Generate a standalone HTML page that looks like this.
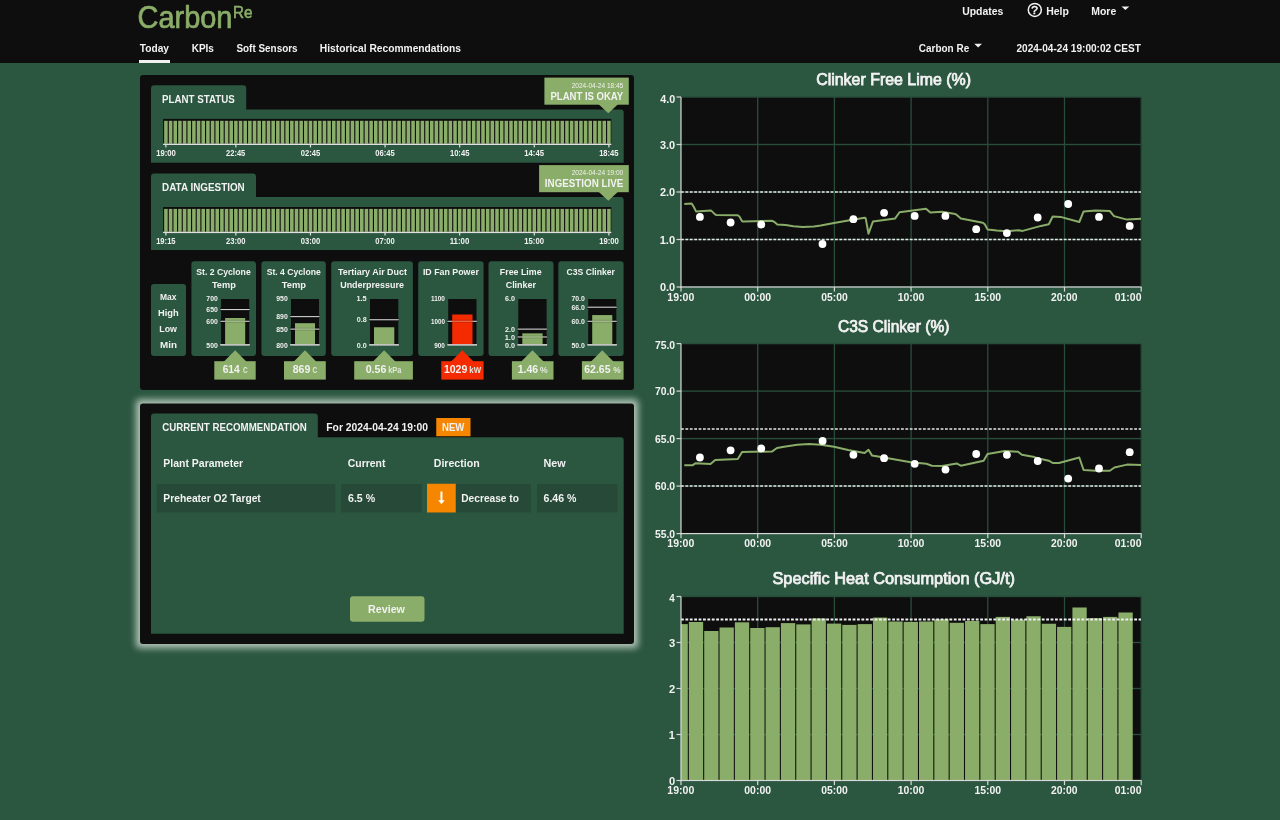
<!DOCTYPE html>
<html><head><meta charset="utf-8"><title>Carbon Re</title>
<style>
html,body{margin:0;padding:0;background:#2b5640;width:1280px;height:820px;overflow:hidden}
svg{display:block;font-family:"Liberation Sans", sans-serif;opacity:0.999}
</style></head><body>
<svg width="1280" height="820" viewBox="0 0 1280 820">
<defs><filter id="glow" x="-10%" y="-10%" width="120%" height="120%"><feMorphology operator="dilate" radius="4" in="SourceAlpha" result="d"/><feGaussianBlur in="d" stdDeviation="3.5" result="b"/><feFlood flood-color="#b4c6b9" result="c"/><feComposite in="c" in2="b" operator="in"/></filter></defs>
<rect x="0.00" y="0.00" width="1280.00" height="63.00" fill="#0e0e0e"/>
<text id="t0" x="137.50" y="28.00" font-size="31" font-weight="normal" fill="#8aad69" textLength="94.95" lengthAdjust="spacingAndGlyphs" stroke="#8aad69" stroke-width="0.7">Carbon</text>
<text id="t1" x="233.00" y="17.50" font-size="16.5" font-weight="normal" fill="#8aad69" textLength="19.45" lengthAdjust="spacingAndGlyphs" stroke="#8aad69" stroke-width="0.6">Re</text>
<text id="t2" x="139.75" y="52.00" font-size="11.5" font-weight="bold" fill="#f2f2f2" textLength="29.20" lengthAdjust="spacingAndGlyphs">Today</text>
<text id="t3" x="191.70" y="52.00" font-size="11.5" font-weight="bold" fill="#f2f2f2" textLength="22.20" lengthAdjust="spacingAndGlyphs">KPIs</text>
<text id="t4" x="236.45" y="52.00" font-size="11.5" font-weight="bold" fill="#f2f2f2" textLength="61.20" lengthAdjust="spacingAndGlyphs">Soft Sensors</text>
<text id="t5" x="319.85" y="52.00" font-size="11.5" font-weight="bold" fill="#f2f2f2" textLength="141.20" lengthAdjust="spacingAndGlyphs">Historical Recommendations</text>
<rect x="139.00" y="60.00" width="31.00" height="3.00" fill="#f2f2f2"/>
<text id="t6" x="962.20" y="14.90" font-size="11.5" font-weight="bold" fill="#f2f2f2" textLength="41.20" lengthAdjust="spacingAndGlyphs">Updates</text>
<circle cx="1034.8" cy="9.9" r="6.5" fill="none" stroke="#f2f2f2" stroke-width="1.5"/>
<text id="t7" x="1031.35" y="13.60" font-size="10" font-weight="normal" fill="#f2f2f2" textLength="6.60" lengthAdjust="spacingAndGlyphs" stroke="#f2f2f2" stroke-width="0.5">?</text>
<text id="t8" x="1046.20" y="14.90" font-size="11.5" font-weight="bold" fill="#f2f2f2" textLength="22.70" lengthAdjust="spacingAndGlyphs">Help</text>
<text id="t9" x="1091.25" y="14.90" font-size="11.5" font-weight="bold" fill="#f2f2f2" textLength="24.95" lengthAdjust="spacingAndGlyphs">More</text>
<path d="M1121.5,6.5 L1129.3,6.5 L1125.4,10 Z" fill="#f2f2f2"/>
<text id="t10" x="918.75" y="52.00" font-size="11.5" font-weight="bold" fill="#f2f2f2" textLength="50.45" lengthAdjust="spacingAndGlyphs">Carbon Re</text>
<path d="M974.3,43.7 L982,43.7 L978.15,47.5 Z" fill="#f2f2f2"/>
<text id="t11" x="1016.45" y="52.00" font-size="11.5" font-weight="bold" fill="#f2f2f2" textLength="124.45" lengthAdjust="spacingAndGlyphs">2024-04-24 19:00:02 CEST</text>
<rect x="140.00" y="75.00" width="494.00" height="315.00" fill="#0e0e0e" rx="3"/>
<path d="M151,88.2 Q151,85.2 154,85.2 L243.2,85.2 Q246.2,85.2 246.2,88.2 L246.2,109.4 L620.7,109.4 Q623.7,109.4 623.7,112.4 L623.7,162.7 L151,162.7 Z" fill="#2b5640"/>
<text id="t12" x="162.05" y="103.00" font-size="11.2" font-weight="bold" fill="#f2f2f2" textLength="72.70" lengthAdjust="spacingAndGlyphs">PLANT STATUS</text>
<rect x="163.10" y="118.90" width="448.20" height="25.00" fill="#0e0e0e"/>
<rect x="164.15" y="120.80" width="3.55" height="22.90" fill="#8aad69"/>
<rect x="168.81" y="120.80" width="3.55" height="22.90" fill="#8aad69"/>
<rect x="173.48" y="120.80" width="3.55" height="22.90" fill="#8aad69"/>
<rect x="178.14" y="120.80" width="3.55" height="22.90" fill="#8aad69"/>
<rect x="182.80" y="120.80" width="3.55" height="22.90" fill="#8aad69"/>
<rect x="187.47" y="120.80" width="3.55" height="22.90" fill="#8aad69"/>
<rect x="192.13" y="120.80" width="3.55" height="22.90" fill="#8aad69"/>
<rect x="196.79" y="120.80" width="3.55" height="22.90" fill="#8aad69"/>
<rect x="201.45" y="120.80" width="3.55" height="22.90" fill="#8aad69"/>
<rect x="206.12" y="120.80" width="3.55" height="22.90" fill="#8aad69"/>
<rect x="210.78" y="120.80" width="3.55" height="22.90" fill="#8aad69"/>
<rect x="215.44" y="120.80" width="3.55" height="22.90" fill="#8aad69"/>
<rect x="220.11" y="120.80" width="3.55" height="22.90" fill="#8aad69"/>
<rect x="224.77" y="120.80" width="3.55" height="22.90" fill="#8aad69"/>
<rect x="229.43" y="120.80" width="3.55" height="22.90" fill="#8aad69"/>
<rect x="234.10" y="120.80" width="3.55" height="22.90" fill="#8aad69"/>
<rect x="238.76" y="120.80" width="3.55" height="22.90" fill="#8aad69"/>
<rect x="243.42" y="120.80" width="3.55" height="22.90" fill="#8aad69"/>
<rect x="248.08" y="120.80" width="3.55" height="22.90" fill="#8aad69"/>
<rect x="252.75" y="120.80" width="3.55" height="22.90" fill="#8aad69"/>
<rect x="257.41" y="120.80" width="3.55" height="22.90" fill="#8aad69"/>
<rect x="262.07" y="120.80" width="3.55" height="22.90" fill="#8aad69"/>
<rect x="266.74" y="120.80" width="3.55" height="22.90" fill="#8aad69"/>
<rect x="271.40" y="120.80" width="3.55" height="22.90" fill="#8aad69"/>
<rect x="276.06" y="120.80" width="3.55" height="22.90" fill="#8aad69"/>
<rect x="280.73" y="120.80" width="3.55" height="22.90" fill="#8aad69"/>
<rect x="285.39" y="120.80" width="3.55" height="22.90" fill="#8aad69"/>
<rect x="290.05" y="120.80" width="3.55" height="22.90" fill="#8aad69"/>
<rect x="294.71" y="120.80" width="3.55" height="22.90" fill="#8aad69"/>
<rect x="299.38" y="120.80" width="3.55" height="22.90" fill="#8aad69"/>
<rect x="304.04" y="120.80" width="3.55" height="22.90" fill="#8aad69"/>
<rect x="308.70" y="120.80" width="3.55" height="22.90" fill="#8aad69"/>
<rect x="313.37" y="120.80" width="3.55" height="22.90" fill="#8aad69"/>
<rect x="318.03" y="120.80" width="3.55" height="22.90" fill="#8aad69"/>
<rect x="322.69" y="120.80" width="3.55" height="22.90" fill="#8aad69"/>
<rect x="327.36" y="120.80" width="3.55" height="22.90" fill="#8aad69"/>
<rect x="332.02" y="120.80" width="3.55" height="22.90" fill="#8aad69"/>
<rect x="336.68" y="120.80" width="3.55" height="22.90" fill="#8aad69"/>
<rect x="341.34" y="120.80" width="3.55" height="22.90" fill="#8aad69"/>
<rect x="346.01" y="120.80" width="3.55" height="22.90" fill="#8aad69"/>
<rect x="350.67" y="120.80" width="3.55" height="22.90" fill="#8aad69"/>
<rect x="355.33" y="120.80" width="3.55" height="22.90" fill="#8aad69"/>
<rect x="360.00" y="120.80" width="3.55" height="22.90" fill="#8aad69"/>
<rect x="364.66" y="120.80" width="3.55" height="22.90" fill="#8aad69"/>
<rect x="369.32" y="120.80" width="3.55" height="22.90" fill="#8aad69"/>
<rect x="373.99" y="120.80" width="3.55" height="22.90" fill="#8aad69"/>
<rect x="378.65" y="120.80" width="3.55" height="22.90" fill="#8aad69"/>
<rect x="383.31" y="120.80" width="3.55" height="22.90" fill="#8aad69"/>
<rect x="387.97" y="120.80" width="3.55" height="22.90" fill="#8aad69"/>
<rect x="392.64" y="120.80" width="3.55" height="22.90" fill="#8aad69"/>
<rect x="397.30" y="120.80" width="3.55" height="22.90" fill="#8aad69"/>
<rect x="401.96" y="120.80" width="3.55" height="22.90" fill="#8aad69"/>
<rect x="406.63" y="120.80" width="3.55" height="22.90" fill="#8aad69"/>
<rect x="411.29" y="120.80" width="3.55" height="22.90" fill="#8aad69"/>
<rect x="415.95" y="120.80" width="3.55" height="22.90" fill="#8aad69"/>
<rect x="420.62" y="120.80" width="3.55" height="22.90" fill="#8aad69"/>
<rect x="425.28" y="120.80" width="3.55" height="22.90" fill="#8aad69"/>
<rect x="429.94" y="120.80" width="3.55" height="22.90" fill="#8aad69"/>
<rect x="434.60" y="120.80" width="3.55" height="22.90" fill="#8aad69"/>
<rect x="439.27" y="120.80" width="3.55" height="22.90" fill="#8aad69"/>
<rect x="443.93" y="120.80" width="3.55" height="22.90" fill="#8aad69"/>
<rect x="448.59" y="120.80" width="3.55" height="22.90" fill="#8aad69"/>
<rect x="453.26" y="120.80" width="3.55" height="22.90" fill="#8aad69"/>
<rect x="457.92" y="120.80" width="3.55" height="22.90" fill="#8aad69"/>
<rect x="462.58" y="120.80" width="3.55" height="22.90" fill="#8aad69"/>
<rect x="467.25" y="120.80" width="3.55" height="22.90" fill="#8aad69"/>
<rect x="471.91" y="120.80" width="3.55" height="22.90" fill="#8aad69"/>
<rect x="476.57" y="120.80" width="3.55" height="22.90" fill="#8aad69"/>
<rect x="481.23" y="120.80" width="3.55" height="22.90" fill="#8aad69"/>
<rect x="485.90" y="120.80" width="3.55" height="22.90" fill="#8aad69"/>
<rect x="490.56" y="120.80" width="3.55" height="22.90" fill="#8aad69"/>
<rect x="495.22" y="120.80" width="3.55" height="22.90" fill="#8aad69"/>
<rect x="499.89" y="120.80" width="3.55" height="22.90" fill="#8aad69"/>
<rect x="504.55" y="120.80" width="3.55" height="22.90" fill="#8aad69"/>
<rect x="509.21" y="120.80" width="3.55" height="22.90" fill="#8aad69"/>
<rect x="513.88" y="120.80" width="3.55" height="22.90" fill="#8aad69"/>
<rect x="518.54" y="120.80" width="3.55" height="22.90" fill="#8aad69"/>
<rect x="523.20" y="120.80" width="3.55" height="22.90" fill="#8aad69"/>
<rect x="527.86" y="120.80" width="3.55" height="22.90" fill="#8aad69"/>
<rect x="532.53" y="120.80" width="3.55" height="22.90" fill="#8aad69"/>
<rect x="537.19" y="120.80" width="3.55" height="22.90" fill="#8aad69"/>
<rect x="541.85" y="120.80" width="3.55" height="22.90" fill="#8aad69"/>
<rect x="546.52" y="120.80" width="3.55" height="22.90" fill="#8aad69"/>
<rect x="551.18" y="120.80" width="3.55" height="22.90" fill="#8aad69"/>
<rect x="555.84" y="120.80" width="3.55" height="22.90" fill="#8aad69"/>
<rect x="560.50" y="120.80" width="3.55" height="22.90" fill="#8aad69"/>
<rect x="565.17" y="120.80" width="3.55" height="22.90" fill="#8aad69"/>
<rect x="569.83" y="120.80" width="3.55" height="22.90" fill="#8aad69"/>
<rect x="574.49" y="120.80" width="3.55" height="22.90" fill="#8aad69"/>
<rect x="579.16" y="120.80" width="3.55" height="22.90" fill="#8aad69"/>
<rect x="583.82" y="120.80" width="3.55" height="22.90" fill="#8aad69"/>
<rect x="588.48" y="120.80" width="3.55" height="22.90" fill="#8aad69"/>
<rect x="593.15" y="120.80" width="3.55" height="22.90" fill="#8aad69"/>
<rect x="597.81" y="120.80" width="3.55" height="22.90" fill="#8aad69"/>
<rect x="602.47" y="120.80" width="3.55" height="22.90" fill="#8aad69"/>
<rect x="607.13" y="120.80" width="3.55" height="22.90" fill="#8aad69"/>
<rect x="163.10" y="143.60" width="448.20" height="1.40" fill="#e0e0e0"/>
<rect x="165.30" y="144.90" width="1.20" height="2.50" fill="#e0e0e0"/>
<text id="t13" x="156.15" y="155.60" font-size="8.4" font-weight="bold" fill="#f2f2f2" textLength="19.70" lengthAdjust="spacingAndGlyphs">19:00</text>
<rect x="235.25" y="144.90" width="1.20" height="2.50" fill="#e0e0e0"/>
<text id="t14" x="226.10" y="155.60" font-size="8.4" font-weight="bold" fill="#f2f2f2" textLength="19.20" lengthAdjust="spacingAndGlyphs">22:45</text>
<rect x="309.85" y="144.90" width="1.20" height="2.50" fill="#e0e0e0"/>
<text id="t15" x="300.70" y="155.60" font-size="8.4" font-weight="bold" fill="#f2f2f2" textLength="19.45" lengthAdjust="spacingAndGlyphs">02:45</text>
<rect x="384.46" y="144.90" width="1.20" height="2.50" fill="#e0e0e0"/>
<text id="t16" x="375.31" y="155.60" font-size="8.4" font-weight="bold" fill="#f2f2f2" textLength="19.45" lengthAdjust="spacingAndGlyphs">06:45</text>
<rect x="459.07" y="144.90" width="1.20" height="2.50" fill="#e0e0e0"/>
<text id="t17" x="449.92" y="155.60" font-size="8.4" font-weight="bold" fill="#f2f2f2" textLength="19.45" lengthAdjust="spacingAndGlyphs">10:45</text>
<rect x="533.68" y="144.90" width="1.20" height="2.50" fill="#e0e0e0"/>
<text id="t18" x="524.28" y="155.60" font-size="8.4" font-weight="bold" fill="#f2f2f2" textLength="19.70" lengthAdjust="spacingAndGlyphs">14:45</text>
<rect x="608.28" y="144.90" width="1.20" height="2.50" fill="#e0e0e0"/>
<text id="t19" x="599.13" y="155.60" font-size="8.4" font-weight="bold" fill="#f2f2f2" textLength="19.45" lengthAdjust="spacingAndGlyphs">18:45</text>
<rect x="544.40" y="77.60" width="84.40" height="27.10" fill="#8aad69"/>
<path d="M598,103.69999999999999 L618.6,103.69999999999999 L608.3,113.29999999999998 Z" fill="#8aad69"/>
<text id="t20" x="571.75" y="87.70" font-size="6.8" font-weight="normal" fill="#f2f2f2" textLength="51.45" lengthAdjust="spacingAndGlyphs">2024-04-24 18:45</text>
<text id="t21" x="550.50" y="99.60" font-size="10.6" font-weight="bold" fill="#f2f2f2" textLength="72.70" lengthAdjust="spacingAndGlyphs">PLANT IS OKAY</text>
<path d="M151,176.4 Q151,173.4 154,173.4 L253,173.4 Q256,173.4 256,176.4 L256,197.0 L620.7,197.0 Q623.7,197.0 623.7,200.0 L623.7,250.0 L151,250.0 Z" fill="#2b5640"/>
<text id="t22" x="162.05" y="191.20" font-size="11.2" font-weight="bold" fill="#f2f2f2" textLength="82.70" lengthAdjust="spacingAndGlyphs">DATA INGESTION</text>
<rect x="163.10" y="207.00" width="448.20" height="25.00" fill="#0e0e0e"/>
<rect x="164.15" y="208.90" width="3.55" height="22.90" fill="#8aad69"/>
<rect x="168.81" y="208.90" width="3.55" height="22.90" fill="#8aad69"/>
<rect x="173.48" y="208.90" width="3.55" height="22.90" fill="#8aad69"/>
<rect x="178.14" y="208.90" width="3.55" height="22.90" fill="#8aad69"/>
<rect x="182.80" y="208.90" width="3.55" height="22.90" fill="#8aad69"/>
<rect x="187.47" y="208.90" width="3.55" height="22.90" fill="#8aad69"/>
<rect x="192.13" y="208.90" width="3.55" height="22.90" fill="#8aad69"/>
<rect x="196.79" y="208.90" width="3.55" height="22.90" fill="#8aad69"/>
<rect x="201.45" y="208.90" width="3.55" height="22.90" fill="#8aad69"/>
<rect x="206.12" y="208.90" width="3.55" height="22.90" fill="#8aad69"/>
<rect x="210.78" y="208.90" width="3.55" height="22.90" fill="#8aad69"/>
<rect x="215.44" y="208.90" width="3.55" height="22.90" fill="#8aad69"/>
<rect x="220.11" y="208.90" width="3.55" height="22.90" fill="#8aad69"/>
<rect x="224.77" y="208.90" width="3.55" height="22.90" fill="#8aad69"/>
<rect x="229.43" y="208.90" width="3.55" height="22.90" fill="#8aad69"/>
<rect x="234.10" y="208.90" width="3.55" height="22.90" fill="#8aad69"/>
<rect x="238.76" y="208.90" width="3.55" height="22.90" fill="#8aad69"/>
<rect x="243.42" y="208.90" width="3.55" height="22.90" fill="#8aad69"/>
<rect x="248.08" y="208.90" width="3.55" height="22.90" fill="#8aad69"/>
<rect x="252.75" y="208.90" width="3.55" height="22.90" fill="#8aad69"/>
<rect x="257.41" y="208.90" width="3.55" height="22.90" fill="#8aad69"/>
<rect x="262.07" y="208.90" width="3.55" height="22.90" fill="#8aad69"/>
<rect x="266.74" y="208.90" width="3.55" height="22.90" fill="#8aad69"/>
<rect x="271.40" y="208.90" width="3.55" height="22.90" fill="#8aad69"/>
<rect x="276.06" y="208.90" width="3.55" height="22.90" fill="#8aad69"/>
<rect x="280.73" y="208.90" width="3.55" height="22.90" fill="#8aad69"/>
<rect x="285.39" y="208.90" width="3.55" height="22.90" fill="#8aad69"/>
<rect x="290.05" y="208.90" width="3.55" height="22.90" fill="#8aad69"/>
<rect x="294.71" y="208.90" width="3.55" height="22.90" fill="#8aad69"/>
<rect x="299.38" y="208.90" width="3.55" height="22.90" fill="#8aad69"/>
<rect x="304.04" y="208.90" width="3.55" height="22.90" fill="#8aad69"/>
<rect x="308.70" y="208.90" width="3.55" height="22.90" fill="#8aad69"/>
<rect x="313.37" y="208.90" width="3.55" height="22.90" fill="#8aad69"/>
<rect x="318.03" y="208.90" width="3.55" height="22.90" fill="#8aad69"/>
<rect x="322.69" y="208.90" width="3.55" height="22.90" fill="#8aad69"/>
<rect x="327.36" y="208.90" width="3.55" height="22.90" fill="#8aad69"/>
<rect x="332.02" y="208.90" width="3.55" height="22.90" fill="#8aad69"/>
<rect x="336.68" y="208.90" width="3.55" height="22.90" fill="#8aad69"/>
<rect x="341.34" y="208.90" width="3.55" height="22.90" fill="#8aad69"/>
<rect x="346.01" y="208.90" width="3.55" height="22.90" fill="#8aad69"/>
<rect x="350.67" y="208.90" width="3.55" height="22.90" fill="#8aad69"/>
<rect x="355.33" y="208.90" width="3.55" height="22.90" fill="#8aad69"/>
<rect x="360.00" y="208.90" width="3.55" height="22.90" fill="#8aad69"/>
<rect x="364.66" y="208.90" width="3.55" height="22.90" fill="#8aad69"/>
<rect x="369.32" y="208.90" width="3.55" height="22.90" fill="#8aad69"/>
<rect x="373.99" y="208.90" width="3.55" height="22.90" fill="#8aad69"/>
<rect x="378.65" y="208.90" width="3.55" height="22.90" fill="#8aad69"/>
<rect x="383.31" y="208.90" width="3.55" height="22.90" fill="#8aad69"/>
<rect x="387.97" y="208.90" width="3.55" height="22.90" fill="#8aad69"/>
<rect x="392.64" y="208.90" width="3.55" height="22.90" fill="#8aad69"/>
<rect x="397.30" y="208.90" width="3.55" height="22.90" fill="#8aad69"/>
<rect x="401.96" y="208.90" width="3.55" height="22.90" fill="#8aad69"/>
<rect x="406.63" y="208.90" width="3.55" height="22.90" fill="#8aad69"/>
<rect x="411.29" y="208.90" width="3.55" height="22.90" fill="#8aad69"/>
<rect x="415.95" y="208.90" width="3.55" height="22.90" fill="#8aad69"/>
<rect x="420.62" y="208.90" width="3.55" height="22.90" fill="#8aad69"/>
<rect x="425.28" y="208.90" width="3.55" height="22.90" fill="#8aad69"/>
<rect x="429.94" y="208.90" width="3.55" height="22.90" fill="#8aad69"/>
<rect x="434.60" y="208.90" width="3.55" height="22.90" fill="#8aad69"/>
<rect x="439.27" y="208.90" width="3.55" height="22.90" fill="#8aad69"/>
<rect x="443.93" y="208.90" width="3.55" height="22.90" fill="#8aad69"/>
<rect x="448.59" y="208.90" width="3.55" height="22.90" fill="#8aad69"/>
<rect x="453.26" y="208.90" width="3.55" height="22.90" fill="#8aad69"/>
<rect x="457.92" y="208.90" width="3.55" height="22.90" fill="#8aad69"/>
<rect x="462.58" y="208.90" width="3.55" height="22.90" fill="#8aad69"/>
<rect x="467.25" y="208.90" width="3.55" height="22.90" fill="#8aad69"/>
<rect x="471.91" y="208.90" width="3.55" height="22.90" fill="#8aad69"/>
<rect x="476.57" y="208.90" width="3.55" height="22.90" fill="#8aad69"/>
<rect x="481.23" y="208.90" width="3.55" height="22.90" fill="#8aad69"/>
<rect x="485.90" y="208.90" width="3.55" height="22.90" fill="#8aad69"/>
<rect x="490.56" y="208.90" width="3.55" height="22.90" fill="#8aad69"/>
<rect x="495.22" y="208.90" width="3.55" height="22.90" fill="#8aad69"/>
<rect x="499.89" y="208.90" width="3.55" height="22.90" fill="#8aad69"/>
<rect x="504.55" y="208.90" width="3.55" height="22.90" fill="#8aad69"/>
<rect x="509.21" y="208.90" width="3.55" height="22.90" fill="#8aad69"/>
<rect x="513.88" y="208.90" width="3.55" height="22.90" fill="#8aad69"/>
<rect x="518.54" y="208.90" width="3.55" height="22.90" fill="#8aad69"/>
<rect x="523.20" y="208.90" width="3.55" height="22.90" fill="#8aad69"/>
<rect x="527.86" y="208.90" width="3.55" height="22.90" fill="#8aad69"/>
<rect x="532.53" y="208.90" width="3.55" height="22.90" fill="#8aad69"/>
<rect x="537.19" y="208.90" width="3.55" height="22.90" fill="#8aad69"/>
<rect x="541.85" y="208.90" width="3.55" height="22.90" fill="#8aad69"/>
<rect x="546.52" y="208.90" width="3.55" height="22.90" fill="#8aad69"/>
<rect x="551.18" y="208.90" width="3.55" height="22.90" fill="#8aad69"/>
<rect x="555.84" y="208.90" width="3.55" height="22.90" fill="#8aad69"/>
<rect x="560.50" y="208.90" width="3.55" height="22.90" fill="#8aad69"/>
<rect x="565.17" y="208.90" width="3.55" height="22.90" fill="#8aad69"/>
<rect x="569.83" y="208.90" width="3.55" height="22.90" fill="#8aad69"/>
<rect x="574.49" y="208.90" width="3.55" height="22.90" fill="#8aad69"/>
<rect x="579.16" y="208.90" width="3.55" height="22.90" fill="#8aad69"/>
<rect x="583.82" y="208.90" width="3.55" height="22.90" fill="#8aad69"/>
<rect x="588.48" y="208.90" width="3.55" height="22.90" fill="#8aad69"/>
<rect x="593.15" y="208.90" width="3.55" height="22.90" fill="#8aad69"/>
<rect x="597.81" y="208.90" width="3.55" height="22.90" fill="#8aad69"/>
<rect x="602.47" y="208.90" width="3.55" height="22.90" fill="#8aad69"/>
<rect x="607.13" y="208.90" width="3.55" height="22.90" fill="#8aad69"/>
<rect x="163.10" y="231.70" width="448.20" height="1.40" fill="#e0e0e0"/>
<rect x="165.30" y="233.00" width="1.20" height="2.50" fill="#e0e0e0"/>
<text id="t23" x="156.15" y="243.70" font-size="8.4" font-weight="bold" fill="#f2f2f2" textLength="19.45" lengthAdjust="spacingAndGlyphs">19:15</text>
<rect x="235.25" y="233.00" width="1.20" height="2.50" fill="#e0e0e0"/>
<text id="t24" x="226.10" y="243.70" font-size="8.4" font-weight="bold" fill="#f2f2f2" textLength="19.45" lengthAdjust="spacingAndGlyphs">23:00</text>
<rect x="309.85" y="233.00" width="1.20" height="2.50" fill="#e0e0e0"/>
<text id="t25" x="300.70" y="243.70" font-size="8.4" font-weight="bold" fill="#f2f2f2" textLength="19.45" lengthAdjust="spacingAndGlyphs">03:00</text>
<rect x="384.46" y="233.00" width="1.20" height="2.50" fill="#e0e0e0"/>
<text id="t26" x="375.31" y="243.70" font-size="8.4" font-weight="bold" fill="#f2f2f2" textLength="19.45" lengthAdjust="spacingAndGlyphs">07:00</text>
<rect x="459.07" y="233.00" width="1.20" height="2.50" fill="#e0e0e0"/>
<text id="t27" x="449.67" y="243.70" font-size="8.4" font-weight="bold" fill="#f2f2f2" textLength="19.70" lengthAdjust="spacingAndGlyphs">11:00</text>
<rect x="533.68" y="233.00" width="1.20" height="2.50" fill="#e0e0e0"/>
<text id="t28" x="524.28" y="243.70" font-size="8.4" font-weight="bold" fill="#f2f2f2" textLength="19.70" lengthAdjust="spacingAndGlyphs">15:00</text>
<rect x="608.28" y="233.00" width="1.20" height="2.50" fill="#e0e0e0"/>
<text id="t29" x="599.13" y="243.70" font-size="8.4" font-weight="bold" fill="#f2f2f2" textLength="19.70" lengthAdjust="spacingAndGlyphs">19:00</text>
<rect x="539.10" y="165.10" width="89.70" height="27.10" fill="#8aad69"/>
<path d="M598,191.2 L618.6,191.2 L608.3,200.79999999999998 Z" fill="#8aad69"/>
<text id="t30" x="571.75" y="175.20" font-size="6.8" font-weight="normal" fill="#f2f2f2" textLength="51.45" lengthAdjust="spacingAndGlyphs">2024-04-24 19:00</text>
<text id="t31" x="544.85" y="187.10" font-size="10.6" font-weight="bold" fill="#f2f2f2" textLength="78.45" lengthAdjust="spacingAndGlyphs">INGESTION LIVE</text>
<rect x="151.00" y="284.00" width="35.00" height="72.10" fill="#2b5640" rx="3"/>
<text id="t32" x="160.00" y="300.00" font-size="8.6" font-weight="bold" fill="#f2f2f2" textLength="16.45" lengthAdjust="spacingAndGlyphs">Max</text>
<text id="t33" x="158.05" y="316.00" font-size="8.6" font-weight="bold" fill="#f2f2f2" textLength="20.70" lengthAdjust="spacingAndGlyphs">High</text>
<text id="t34" x="159.30" y="332.00" font-size="8.6" font-weight="bold" fill="#f2f2f2" textLength="17.70" lengthAdjust="spacingAndGlyphs">Low</text>
<text id="t35" x="160.05" y="347.50" font-size="8.6" font-weight="bold" fill="#f2f2f2" textLength="16.95" lengthAdjust="spacingAndGlyphs">Min</text>
<rect x="191.40" y="261.30" width="64.60" height="94.80" fill="#2b5640" rx="3"/>
<text id="t36" x="196.25" y="274.80" font-size="9.6" font-weight="bold" fill="#f2f2f2" textLength="54.45" lengthAdjust="spacingAndGlyphs">St. 2 Cyclone</text>
<text id="t37" x="211.90" y="288.30" font-size="9.6" font-weight="bold" fill="#f2f2f2" textLength="23.95" lengthAdjust="spacingAndGlyphs">Temp</text>
<rect x="221.10" y="299.00" width="28.10" height="45.80" fill="#0e0e0e"/>
<rect x="220.30" y="307.95" width="29.40" height="3.20" fill="#0e0e0e"/>
<rect x="220.30" y="309.00" width="29.40" height="1.10" fill="#cfcfcf"/>
<rect x="220.30" y="319.70" width="29.40" height="3.20" fill="#0e0e0e"/>
<rect x="220.30" y="320.75" width="29.40" height="1.10" fill="#cfcfcf"/>
<rect x="220.30" y="344.25" width="29.40" height="1.10" fill="#cfcfcf"/>
<rect x="225.10" y="318.01" width="20.10" height="26.79" fill="#8aad69"/>
<rect x="225.10" y="319.70" width="20.10" height="3.20" fill="rgba(0,0,0,0.12)"/>
<rect x="225.10" y="320.75" width="20.10" height="1.10" fill="rgba(255,255,255,0.35)"/>
<rect x="220.30" y="344.10" width="29.40" height="1.40" fill="#c8c8c8"/>
<text id="t38" x="206.35" y="300.50" font-size="7.4" font-weight="bold" fill="#f2f2f2" textLength="11.45" lengthAdjust="spacingAndGlyphs">700</text>
<text id="t39" x="206.35" y="312.25" font-size="7.4" font-weight="bold" fill="#f2f2f2" textLength="11.45" lengthAdjust="spacingAndGlyphs">650</text>
<text id="t40" x="206.35" y="324.00" font-size="7.4" font-weight="bold" fill="#f2f2f2" textLength="11.45" lengthAdjust="spacingAndGlyphs">600</text>
<text id="t41" x="206.35" y="347.50" font-size="7.4" font-weight="bold" fill="#f2f2f2" textLength="11.45" lengthAdjust="spacingAndGlyphs">500</text>
<path d="M223.25,362.3 L235.15,350.2 L247.05,362.3 Z" fill="#8aad69"/>
<rect x="214.30" y="361.20" width="41.40" height="18.40" fill="#8aad69"/>
<text id="t42" x="222.65" y="373.30" font-size="10" font-weight="bold" fill="#f2f2f2" textLength="17.20" lengthAdjust="spacingAndGlyphs">614</text>
<text id="t43" x="242.90" y="373.30" font-size="8.2" font-weight="bold" fill="#e2e9dc" textLength="4.70" lengthAdjust="spacingAndGlyphs">C</text>
<rect x="261.40" y="261.30" width="64.40" height="94.80" fill="#2b5640" rx="3"/>
<text id="t44" x="266.65" y="274.80" font-size="9.6" font-weight="bold" fill="#f2f2f2" textLength="54.20" lengthAdjust="spacingAndGlyphs">St. 4 Cyclone</text>
<text id="t45" x="281.70" y="288.30" font-size="9.6" font-weight="bold" fill="#f2f2f2" textLength="24.20" lengthAdjust="spacingAndGlyphs">Temp</text>
<rect x="291.00" y="299.00" width="28.00" height="45.80" fill="#0e0e0e"/>
<rect x="290.20" y="315.00" width="29.30" height="3.20" fill="#0e0e0e"/>
<rect x="290.20" y="316.05" width="29.30" height="1.10" fill="#cfcfcf"/>
<rect x="290.20" y="327.53" width="29.30" height="3.20" fill="#0e0e0e"/>
<rect x="290.20" y="328.58" width="29.30" height="1.10" fill="#cfcfcf"/>
<rect x="290.20" y="344.25" width="29.30" height="1.10" fill="#cfcfcf"/>
<rect x="295.00" y="323.18" width="20.00" height="21.62" fill="#8aad69"/>
<rect x="295.00" y="327.53" width="20.00" height="3.20" fill="rgba(0,0,0,0.12)"/>
<rect x="295.00" y="328.58" width="20.00" height="1.10" fill="rgba(255,255,255,0.35)"/>
<rect x="290.20" y="344.10" width="29.30" height="1.40" fill="#c8c8c8"/>
<text id="t46" x="276.25" y="300.50" font-size="7.4" font-weight="bold" fill="#f2f2f2" textLength="11.45" lengthAdjust="spacingAndGlyphs">950</text>
<text id="t47" x="276.25" y="319.30" font-size="7.4" font-weight="bold" fill="#f2f2f2" textLength="11.45" lengthAdjust="spacingAndGlyphs">890</text>
<text id="t48" x="276.25" y="331.83" font-size="7.4" font-weight="bold" fill="#f2f2f2" textLength="11.45" lengthAdjust="spacingAndGlyphs">850</text>
<text id="t49" x="276.25" y="347.50" font-size="7.4" font-weight="bold" fill="#f2f2f2" textLength="11.45" lengthAdjust="spacingAndGlyphs">800</text>
<path d="M293.10,362.3 L305.00,350.2 L316.90,362.3 Z" fill="#8aad69"/>
<rect x="284.00" y="361.20" width="41.80" height="18.40" fill="#8aad69"/>
<text id="t50" x="292.65" y="373.30" font-size="10" font-weight="bold" fill="#f2f2f2" textLength="17.70" lengthAdjust="spacingAndGlyphs">869</text>
<text id="t51" x="312.55" y="373.30" font-size="8.2" font-weight="bold" fill="#e2e9dc" textLength="4.70" lengthAdjust="spacingAndGlyphs">C</text>
<rect x="331.20" y="261.30" width="81.70" height="94.80" fill="#2b5640" rx="3"/>
<text id="t52" x="338.00" y="274.80" font-size="9.6" font-weight="bold" fill="#f2f2f2" textLength="68.95" lengthAdjust="spacingAndGlyphs">Tertiary Air Duct</text>
<text id="t53" x="340.20" y="288.30" font-size="9.6" font-weight="bold" fill="#f2f2f2" textLength="63.70" lengthAdjust="spacingAndGlyphs">Underpressure</text>
<rect x="370.00" y="299.00" width="28.30" height="45.80" fill="#0e0e0e"/>
<rect x="369.20" y="318.13" width="29.60" height="3.20" fill="#0e0e0e"/>
<rect x="369.20" y="319.18" width="29.60" height="1.10" fill="#cfcfcf"/>
<rect x="369.20" y="344.25" width="29.60" height="1.10" fill="#cfcfcf"/>
<rect x="374.00" y="327.25" width="20.30" height="17.55" fill="#8aad69"/>
<rect x="369.20" y="344.10" width="29.60" height="1.40" fill="#c8c8c8"/>
<text id="t54" x="356.50" y="300.50" font-size="7.4" font-weight="bold" fill="#f2f2f2" textLength="10.20" lengthAdjust="spacingAndGlyphs">1.5</text>
<text id="t55" x="356.75" y="322.43" font-size="7.4" font-weight="bold" fill="#f2f2f2" textLength="9.95" lengthAdjust="spacingAndGlyphs">0.8</text>
<text id="t56" x="356.75" y="347.50" font-size="7.4" font-weight="bold" fill="#f2f2f2" textLength="9.95" lengthAdjust="spacingAndGlyphs">0.0</text>
<path d="M372.25,362.3 L384.15,350.2 L396.05,362.3 Z" fill="#8aad69"/>
<rect x="354.20" y="361.20" width="58.70" height="18.40" fill="#8aad69"/>
<text id="t57" x="365.65" y="373.30" font-size="10" font-weight="bold" fill="#f2f2f2" textLength="20.70" lengthAdjust="spacingAndGlyphs">0.56</text>
<text id="t58" x="388.25" y="373.30" font-size="8.2" font-weight="bold" fill="#e2e9dc" textLength="13.20" lengthAdjust="spacingAndGlyphs">kPa</text>
<rect x="418.20" y="261.30" width="65.40" height="94.80" fill="#2b5640" rx="3"/>
<text id="t59" x="422.90" y="274.80" font-size="9.6" font-weight="bold" fill="#f2f2f2" textLength="55.95" lengthAdjust="spacingAndGlyphs">ID Fan Power</text>
<rect x="448.20" y="299.00" width="28.30" height="45.80" fill="#0e0e0e"/>
<rect x="447.40" y="319.70" width="29.60" height="3.20" fill="#0e0e0e"/>
<rect x="447.40" y="320.75" width="29.60" height="1.10" fill="#cfcfcf"/>
<rect x="447.40" y="344.25" width="29.60" height="1.10" fill="#cfcfcf"/>
<rect x="452.20" y="314.49" width="20.30" height="30.31" fill="#f42a00"/>
<rect x="452.20" y="319.70" width="20.30" height="3.20" fill="rgba(0,0,0,0.12)"/>
<rect x="452.20" y="320.75" width="20.30" height="1.10" fill="rgba(255,255,255,0.35)"/>
<rect x="447.40" y="344.10" width="29.60" height="1.40" fill="#c8c8c8"/>
<text id="t60" x="430.95" y="300.50" font-size="7.4" font-weight="bold" fill="#f2f2f2" textLength="13.95" lengthAdjust="spacingAndGlyphs">1100</text>
<text id="t61" x="430.95" y="324.00" font-size="7.4" font-weight="bold" fill="#f2f2f2" textLength="13.95" lengthAdjust="spacingAndGlyphs">1000</text>
<text id="t62" x="434.20" y="347.50" font-size="7.4" font-weight="bold" fill="#f2f2f2" textLength="10.70" lengthAdjust="spacingAndGlyphs">900</text>
<path d="M450.45,362.3 L462.35,350.2 L474.25,362.3 Z" fill="#f42a00"/>
<rect x="441.30" y="361.20" width="42.30" height="18.40" fill="#f42a00"/>
<text id="t63" x="443.90" y="373.30" font-size="10" font-weight="bold" fill="#f2f2f2" textLength="23.45" lengthAdjust="spacingAndGlyphs">1029</text>
<text id="t64" x="469.30" y="373.30" font-size="8.2" font-weight="bold" fill="#e2e9dc" textLength="11.70" lengthAdjust="spacingAndGlyphs">kW</text>
<rect x="488.50" y="261.30" width="65.00" height="94.80" fill="#2b5640" rx="3"/>
<text id="t65" x="499.85" y="274.80" font-size="9.6" font-weight="bold" fill="#f2f2f2" textLength="41.70" lengthAdjust="spacingAndGlyphs">Free Lime</text>
<text id="t66" x="505.65" y="288.30" font-size="9.6" font-weight="bold" fill="#f2f2f2" textLength="30.45" lengthAdjust="spacingAndGlyphs">Clinker</text>
<rect x="518.30" y="299.00" width="28.30" height="45.80" fill="#0e0e0e"/>
<rect x="517.50" y="327.53" width="29.60" height="3.20" fill="#0e0e0e"/>
<rect x="517.50" y="328.58" width="29.60" height="1.10" fill="#cfcfcf"/>
<rect x="517.50" y="335.37" width="29.60" height="3.20" fill="#0e0e0e"/>
<rect x="517.50" y="336.42" width="29.60" height="1.10" fill="#cfcfcf"/>
<rect x="517.50" y="344.25" width="29.60" height="1.10" fill="#cfcfcf"/>
<rect x="522.30" y="333.36" width="20.30" height="11.44" fill="#8aad69"/>
<rect x="522.30" y="335.37" width="20.30" height="3.20" fill="rgba(0,0,0,0.12)"/>
<rect x="522.30" y="336.42" width="20.30" height="1.10" fill="rgba(255,255,255,0.35)"/>
<rect x="517.50" y="344.10" width="29.60" height="1.40" fill="#c8c8c8"/>
<text id="t67" x="505.05" y="300.50" font-size="7.4" font-weight="bold" fill="#f2f2f2" textLength="9.95" lengthAdjust="spacingAndGlyphs">6.0</text>
<text id="t68" x="505.05" y="331.83" font-size="7.4" font-weight="bold" fill="#f2f2f2" textLength="9.95" lengthAdjust="spacingAndGlyphs">2.0</text>
<text id="t69" x="504.80" y="339.67" font-size="7.4" font-weight="bold" fill="#f2f2f2" textLength="10.20" lengthAdjust="spacingAndGlyphs">1.0</text>
<text id="t70" x="505.05" y="347.50" font-size="7.4" font-weight="bold" fill="#f2f2f2" textLength="9.95" lengthAdjust="spacingAndGlyphs">0.0</text>
<path d="M520.55,362.3 L532.45,350.2 L544.35,362.3 Z" fill="#8aad69"/>
<rect x="511.90" y="361.20" width="41.60" height="18.40" fill="#8aad69"/>
<text id="t71" x="517.70" y="373.30" font-size="10" font-weight="bold" fill="#f2f2f2" textLength="20.45" lengthAdjust="spacingAndGlyphs">1.46</text>
<text id="t72" x="539.75" y="373.30" font-size="8.2" font-weight="bold" fill="#e2e9dc" textLength="7.95" lengthAdjust="spacingAndGlyphs">%</text>
<rect x="558.30" y="261.30" width="65.30" height="94.80" fill="#2b5640" rx="3"/>
<text id="t73" x="566.50" y="274.80" font-size="9.6" font-weight="bold" fill="#f2f2f2" textLength="48.45" lengthAdjust="spacingAndGlyphs">C3S Clinker</text>
<rect x="588.20" y="299.00" width="28.10" height="45.80" fill="#0e0e0e"/>
<rect x="587.40" y="305.60" width="29.40" height="3.20" fill="#0e0e0e"/>
<rect x="587.40" y="306.65" width="29.40" height="1.10" fill="#cfcfcf"/>
<rect x="587.40" y="319.70" width="29.40" height="3.20" fill="#0e0e0e"/>
<rect x="587.40" y="320.75" width="29.40" height="1.10" fill="#cfcfcf"/>
<rect x="587.40" y="344.25" width="29.40" height="1.10" fill="#cfcfcf"/>
<rect x="592.20" y="315.07" width="20.10" height="29.73" fill="#8aad69"/>
<rect x="592.20" y="319.70" width="20.10" height="3.20" fill="rgba(0,0,0,0.12)"/>
<rect x="592.20" y="320.75" width="20.10" height="1.10" fill="rgba(255,255,255,0.35)"/>
<rect x="587.40" y="344.10" width="29.40" height="1.40" fill="#c8c8c8"/>
<text id="t74" x="571.45" y="300.50" font-size="7.4" font-weight="bold" fill="#f2f2f2" textLength="13.45" lengthAdjust="spacingAndGlyphs">70.0</text>
<text id="t75" x="571.45" y="309.90" font-size="7.4" font-weight="bold" fill="#f2f2f2" textLength="13.45" lengthAdjust="spacingAndGlyphs">66.0</text>
<text id="t76" x="571.45" y="324.00" font-size="7.4" font-weight="bold" fill="#f2f2f2" textLength="13.45" lengthAdjust="spacingAndGlyphs">60.0</text>
<text id="t77" x="571.45" y="347.50" font-size="7.4" font-weight="bold" fill="#f2f2f2" textLength="13.45" lengthAdjust="spacingAndGlyphs">50.0</text>
<path d="M590.35,362.3 L602.25,350.2 L614.15,362.3 Z" fill="#8aad69"/>
<rect x="581.90" y="361.20" width="41.70" height="18.40" fill="#8aad69"/>
<text id="t78" x="584.30" y="373.30" font-size="10" font-weight="bold" fill="#f2f2f2" textLength="26.20" lengthAdjust="spacingAndGlyphs">62.65</text>
<text id="t79" x="613.20" y="373.30" font-size="8.2" font-weight="bold" fill="#e2e9dc" textLength="7.45" lengthAdjust="spacingAndGlyphs">%</text>
<rect x="140" y="403.5" width="494" height="240.5" rx="3" fill="#0e0e0e" filter="url(#glow)"/>
<rect x="140.00" y="403.50" width="494.00" height="240.50" fill="#0e0e0e" rx="3"/>
<path d="M151,416.5 Q151,413.5 154,413.5 L314.8,413.5 Q317.8,413.5 317.8,416.5 L317.8,437.3 L620.7,437.3 Q623.7,437.3 623.7,440.3 L623.7,633.8 L151,633.8 Z" fill="#2b5640"/>
<text id="t80" x="162.30" y="431.00" font-size="11.2" font-weight="bold" fill="#f2f2f2" textLength="144.45" lengthAdjust="spacingAndGlyphs">CURRENT RECOMMENDATION</text>
<text id="t81" x="326.25" y="431.25" font-size="11.2" font-weight="bold" fill="#f2f2f2" textLength="101.70" lengthAdjust="spacingAndGlyphs">For 2024-04-24 19:00</text>
<rect x="436.25" y="418.00" width="34.25" height="18.25" fill="#f68600"/>
<text id="t82" x="442.00" y="431.25" font-size="11.2" font-weight="bold" fill="#f2f2f2" textLength="22.45" lengthAdjust="spacingAndGlyphs">NEW</text>
<text id="t83" x="163.35" y="467.00" font-size="11.2" font-weight="bold" fill="#f2f2f2" textLength="79.70" lengthAdjust="spacingAndGlyphs">Plant Parameter</text>
<text id="t84" x="347.75" y="467.00" font-size="11.2" font-weight="bold" fill="#f2f2f2" textLength="37.70" lengthAdjust="spacingAndGlyphs">Current</text>
<text id="t85" x="433.75" y="467.00" font-size="11.2" font-weight="bold" fill="#f2f2f2" textLength="45.95" lengthAdjust="spacingAndGlyphs">Direction</text>
<text id="t86" x="543.50" y="467.00" font-size="11.2" font-weight="bold" fill="#f2f2f2" textLength="22.20" lengthAdjust="spacingAndGlyphs">New</text>
<rect x="156.80" y="484.00" width="178.40" height="28.50" fill="#264a37"/>
<rect x="341.25" y="484.00" width="80.50" height="28.50" fill="#264a37"/>
<rect x="427.00" y="484.00" width="103.75" height="28.50" fill="#264a37"/>
<rect x="537.00" y="484.00" width="80.50" height="28.50" fill="#264a37"/>
<rect x="427.00" y="483.75" width="28.75" height="28.75" fill="#f68600"/>
<rect x="440.45" y="491.50" width="2.00" height="9.50" fill="#fff"/>
<path d="M438.2,500.2 L444.7,500.2 L441.45,504.2 Z" fill="#fff"/>
<text id="t87" x="163.35" y="502.00" font-size="11.2" font-weight="bold" fill="#f2f2f2" textLength="97.45" lengthAdjust="spacingAndGlyphs">Preheater O2 Target</text>
<text id="t88" x="348.00" y="502.00" font-size="11.2" font-weight="bold" fill="#f2f2f2" textLength="27.20" lengthAdjust="spacingAndGlyphs">6.5 %</text>
<text id="t89" x="461.25" y="502.00" font-size="11.2" font-weight="bold" fill="#f2f2f2" textLength="57.70" lengthAdjust="spacingAndGlyphs">Decrease to</text>
<text id="t90" x="543.50" y="502.00" font-size="11.2" font-weight="bold" fill="#f2f2f2" textLength="32.95" lengthAdjust="spacingAndGlyphs">6.46 %</text>
<rect x="350.00" y="596.25" width="74.50" height="25.50" fill="#8aad69" rx="3"/>
<text id="t91" x="368.00" y="612.50" font-size="11.5" font-weight="bold" fill="#f2f2f2" textLength="36.95" lengthAdjust="spacingAndGlyphs">Review</text>
<text id="t92" x="816.15" y="85.00" font-size="15.7" font-weight="normal" fill="#f2f2f2" textLength="154.95" lengthAdjust="spacingAndGlyphs" stroke="#f2f2f2" stroke-width="0.75">Clinker Free Lime (%)</text>
<rect x="681.00" y="97.00" width="460.20" height="190.00" fill="#0e0e0e"/>
<rect x="681.00" y="286.30" width="460.00" height="1.40" fill="#284d3b"/>
<rect x="681.00" y="238.80" width="460.00" height="1.40" fill="#284d3b"/>
<rect x="681.00" y="191.30" width="460.00" height="1.40" fill="#284d3b"/>
<rect x="681.00" y="143.80" width="460.00" height="1.40" fill="#284d3b"/>
<rect x="681.00" y="96.30" width="460.00" height="1.40" fill="#284d3b"/>
<rect x="757.05" y="97.00" width="1.30" height="190.00" fill="#284d3b"/>
<rect x="833.75" y="97.00" width="1.30" height="190.00" fill="#284d3b"/>
<rect x="910.45" y="97.00" width="1.30" height="190.00" fill="#284d3b"/>
<rect x="987.15" y="97.00" width="1.30" height="190.00" fill="#284d3b"/>
<rect x="1063.85" y="97.00" width="1.30" height="190.00" fill="#284d3b"/>
<rect x="1140.55" y="97.00" width="0.65" height="190.00" fill="#284d3b"/>
<line x1="681.0" y1="192.00" x2="1141" y2="192.00" stroke="#e8e8e8" stroke-width="1.5" stroke-dasharray="2.8,1.6"/>
<line x1="681.0" y1="239.50" x2="1141" y2="239.50" stroke="#e8e8e8" stroke-width="1.5" stroke-dasharray="2.8,1.6"/>
<polyline points="684.3,204.0 691.7,203.6 693.7,206.7 696.0,211.4 711.2,210.6 714.8,214.1 716.0,214.9 737.8,215.2 739.4,216.5 742.1,221.2 743.3,221.6 772.2,220.8 774.5,222.0 777.3,224.4 785.6,225.1 793.4,226.2 802.8,226.9 813.8,226.6 820.8,225.6 834.0,223.0 849.7,220.2 864.6,217.7 865.7,218.4 868.5,233.7 872.9,221.6 895.2,218.4 899.5,212.2 926.0,208.7 930.3,212.6 942.0,211.8 955.3,214.1 956.2,214.5 960.9,218.4 982.8,222.7 984.8,224.3 987.5,229.4 996.9,230.5 1006.2,231.3 1018.8,230.2 1022.7,230.9 1041.0,225.9 1048.8,224.3 1052.7,216.5 1060.5,216.9 1079.3,222.0 1083.6,211.4 1095.7,210.6 1109.8,211.0 1114.0,216.1 1127.0,219.6 1141.0,218.8" fill="none" stroke="#89ad68" stroke-width="2" stroke-linejoin="round"/>
<circle cx="699.9" cy="216.9" r="3.9" fill="#fff"/>
<circle cx="730.6" cy="222.5" r="3.9" fill="#fff"/>
<circle cx="761.25" cy="224.5" r="3.9" fill="#fff"/>
<circle cx="822.5" cy="244" r="3.9" fill="#fff"/>
<circle cx="853.4" cy="219.2" r="3.9" fill="#fff"/>
<circle cx="884.1" cy="212.8" r="3.9" fill="#fff"/>
<circle cx="914.7" cy="215.9" r="3.9" fill="#fff"/>
<circle cx="945.4" cy="215.9" r="3.9" fill="#fff"/>
<circle cx="976.2" cy="229.2" r="3.9" fill="#fff"/>
<circle cx="1006.9" cy="233.1" r="3.9" fill="#fff"/>
<circle cx="1037.7" cy="217.5" r="3.9" fill="#fff"/>
<circle cx="1068.2" cy="204" r="3.9" fill="#fff"/>
<circle cx="1099" cy="216.9" r="3.9" fill="#fff"/>
<circle cx="1129.7" cy="225.9" r="3.9" fill="#fff"/>
<rect x="680.40" y="97.00" width="1.20" height="190.60" fill="#d8d8d8"/>
<rect x="676.50" y="286.40" width="4.50" height="1.20" fill="#d8d8d8"/>
<text id="t93" x="659.95" y="291.00" font-size="10.4" font-weight="bold" fill="#f2f2f2" textLength="15.20" lengthAdjust="spacingAndGlyphs">0.0</text>
<rect x="676.50" y="238.90" width="4.50" height="1.20" fill="#d8d8d8"/>
<text id="t94" x="659.70" y="243.50" font-size="10.4" font-weight="bold" fill="#f2f2f2" textLength="15.45" lengthAdjust="spacingAndGlyphs">1.0</text>
<rect x="676.50" y="191.40" width="4.50" height="1.20" fill="#d8d8d8"/>
<text id="t95" x="659.95" y="196.00" font-size="10.4" font-weight="bold" fill="#f2f2f2" textLength="15.20" lengthAdjust="spacingAndGlyphs">2.0</text>
<rect x="676.50" y="143.90" width="4.50" height="1.20" fill="#d8d8d8"/>
<text id="t96" x="659.95" y="148.50" font-size="10.4" font-weight="bold" fill="#f2f2f2" textLength="15.20" lengthAdjust="spacingAndGlyphs">3.0</text>
<rect x="676.50" y="96.40" width="4.50" height="1.20" fill="#d8d8d8"/>
<text id="t97" x="660.20" y="102.70" font-size="10.4" font-weight="bold" fill="#f2f2f2" textLength="14.95" lengthAdjust="spacingAndGlyphs">4.0</text>
<rect x="680.40" y="286.40" width="461.10" height="1.20" fill="#d8d8d8"/>
<rect x="680.40" y="287.00" width="1.20" height="4.60" fill="#d8d8d8"/>
<text id="t98" x="667.35" y="300.60" font-size="10.4" font-weight="bold" fill="#f2f2f2" textLength="26.95" lengthAdjust="spacingAndGlyphs">19:00</text>
<rect x="757.10" y="287.00" width="1.20" height="4.60" fill="#d8d8d8"/>
<text id="t99" x="744.30" y="300.60" font-size="10.4" font-weight="bold" fill="#f2f2f2" textLength="26.70" lengthAdjust="spacingAndGlyphs">00:00</text>
<rect x="833.80" y="287.00" width="1.20" height="4.60" fill="#d8d8d8"/>
<text id="t100" x="821.25" y="300.60" font-size="10.4" font-weight="bold" fill="#f2f2f2" textLength="26.45" lengthAdjust="spacingAndGlyphs">05:00</text>
<rect x="910.50" y="287.00" width="1.20" height="4.60" fill="#d8d8d8"/>
<text id="t101" x="897.70" y="300.60" font-size="10.4" font-weight="bold" fill="#f2f2f2" textLength="26.70" lengthAdjust="spacingAndGlyphs">10:00</text>
<rect x="987.20" y="287.00" width="1.20" height="4.60" fill="#d8d8d8"/>
<text id="t102" x="974.40" y="300.60" font-size="10.4" font-weight="bold" fill="#f2f2f2" textLength="26.70" lengthAdjust="spacingAndGlyphs">15:00</text>
<rect x="1063.90" y="287.00" width="1.20" height="4.60" fill="#d8d8d8"/>
<text id="t103" x="1051.10" y="300.60" font-size="10.4" font-weight="bold" fill="#f2f2f2" textLength="26.45" lengthAdjust="spacingAndGlyphs">20:00</text>
<rect x="1140.60" y="287.00" width="1.20" height="4.60" fill="#d8d8d8"/>
<text id="t104" x="1114.75" y="300.60" font-size="10.4" font-weight="bold" fill="#f2f2f2" textLength="26.70" lengthAdjust="spacingAndGlyphs">01:00</text>
<text id="t105" x="837.95" y="332.00" font-size="15.7" font-weight="normal" fill="#f2f2f2" textLength="111.45" lengthAdjust="spacingAndGlyphs" stroke="#f2f2f2" stroke-width="0.75">C3S Clinker (%)</text>
<rect x="681.00" y="343.60" width="460.20" height="190.00" fill="#0e0e0e"/>
<rect x="681.00" y="532.90" width="460.00" height="1.40" fill="#284d3b"/>
<rect x="681.00" y="485.40" width="460.00" height="1.40" fill="#284d3b"/>
<rect x="681.00" y="437.90" width="460.00" height="1.40" fill="#284d3b"/>
<rect x="681.00" y="390.40" width="460.00" height="1.40" fill="#284d3b"/>
<rect x="681.00" y="342.90" width="460.00" height="1.40" fill="#284d3b"/>
<rect x="757.05" y="343.60" width="1.30" height="190.00" fill="#284d3b"/>
<rect x="833.75" y="343.60" width="1.30" height="190.00" fill="#284d3b"/>
<rect x="910.45" y="343.60" width="1.30" height="190.00" fill="#284d3b"/>
<rect x="987.15" y="343.60" width="1.30" height="190.00" fill="#284d3b"/>
<rect x="1063.85" y="343.60" width="1.30" height="190.00" fill="#284d3b"/>
<rect x="1140.55" y="343.60" width="0.65" height="190.00" fill="#284d3b"/>
<line x1="681.0" y1="429.10" x2="1141" y2="429.10" stroke="#e8e8e8" stroke-width="1.5" stroke-dasharray="2.8,1.6"/>
<line x1="681.0" y1="486.10" x2="1141" y2="486.10" stroke="#e8e8e8" stroke-width="1.5" stroke-dasharray="2.8,1.6"/>
<polyline points="684.3,465.3 692.5,465.3 695.6,463.2 710.5,463.9 715.2,459.9 737.8,459.1 742.1,452.1 772.2,451.4 777.0,448.0 785.6,446.4 797.3,444.7 809.0,444.1 820.8,444.8 834.0,446.8 848.1,449.9 864.6,453.1 868.5,449.8 872.1,455.6 879.5,456.8 895.2,459.5 910.8,462.2 926.4,463.8 931.9,465.7 942.0,466.1 956.9,463.4 957.5,463.8 960.9,465.7 983.6,460.7 987.5,454.0 1004.7,450.9 1018.0,451.7 1021.9,454.8 1034.4,457.1 1041.0,459.1 1048.8,460.7 1052.7,463.0 1059.0,463.0 1079.3,457.5 1083.6,470.0 1095.7,470.8 1109.8,470.7 1114.4,467.5 1127.0,464.6 1141.0,465.0" fill="none" stroke="#89ad68" stroke-width="2" stroke-linejoin="round"/>
<circle cx="699.9" cy="457.5" r="3.9" fill="#fff"/>
<circle cx="730.6" cy="450.3" r="3.9" fill="#fff"/>
<circle cx="761.25" cy="448.5" r="3.9" fill="#fff"/>
<circle cx="822.6" cy="440.9" r="3.9" fill="#fff"/>
<circle cx="853.4" cy="454.8" r="3.9" fill="#fff"/>
<circle cx="884.1" cy="458.2" r="3.9" fill="#fff"/>
<circle cx="914.7" cy="463.8" r="3.9" fill="#fff"/>
<circle cx="945.5" cy="469.6" r="3.9" fill="#fff"/>
<circle cx="976.2" cy="454" r="3.9" fill="#fff"/>
<circle cx="1006.9" cy="454.8" r="3.9" fill="#fff"/>
<circle cx="1037.7" cy="461" r="3.9" fill="#fff"/>
<circle cx="1068.2" cy="478.6" r="3.9" fill="#fff"/>
<circle cx="1099" cy="468.5" r="3.9" fill="#fff"/>
<circle cx="1129.7" cy="452.2" r="3.9" fill="#fff"/>
<rect x="680.40" y="343.60" width="1.20" height="190.60" fill="#d8d8d8"/>
<rect x="676.50" y="533.00" width="4.50" height="1.20" fill="#d8d8d8"/>
<text id="t106" x="654.95" y="537.60" font-size="10.4" font-weight="bold" fill="#f2f2f2" textLength="20.20" lengthAdjust="spacingAndGlyphs">55.0</text>
<rect x="676.50" y="485.50" width="4.50" height="1.20" fill="#d8d8d8"/>
<text id="t107" x="654.95" y="490.10" font-size="10.4" font-weight="bold" fill="#f2f2f2" textLength="20.20" lengthAdjust="spacingAndGlyphs">60.0</text>
<rect x="676.50" y="438.00" width="4.50" height="1.20" fill="#d8d8d8"/>
<text id="t108" x="654.95" y="442.60" font-size="10.4" font-weight="bold" fill="#f2f2f2" textLength="20.20" lengthAdjust="spacingAndGlyphs">65.0</text>
<rect x="676.50" y="390.50" width="4.50" height="1.20" fill="#d8d8d8"/>
<text id="t109" x="654.95" y="395.10" font-size="10.4" font-weight="bold" fill="#f2f2f2" textLength="20.20" lengthAdjust="spacingAndGlyphs">70.0</text>
<rect x="676.50" y="343.00" width="4.50" height="1.20" fill="#d8d8d8"/>
<text id="t110" x="654.95" y="349.30" font-size="10.4" font-weight="bold" fill="#f2f2f2" textLength="20.20" lengthAdjust="spacingAndGlyphs">75.0</text>
<rect x="680.40" y="533.00" width="461.10" height="1.20" fill="#d8d8d8"/>
<rect x="680.40" y="533.60" width="1.20" height="4.60" fill="#d8d8d8"/>
<text id="t111" x="667.35" y="547.20" font-size="10.4" font-weight="bold" fill="#f2f2f2" textLength="26.95" lengthAdjust="spacingAndGlyphs">19:00</text>
<rect x="757.10" y="533.60" width="1.20" height="4.60" fill="#d8d8d8"/>
<text id="t112" x="744.30" y="547.20" font-size="10.4" font-weight="bold" fill="#f2f2f2" textLength="26.70" lengthAdjust="spacingAndGlyphs">00:00</text>
<rect x="833.80" y="533.60" width="1.20" height="4.60" fill="#d8d8d8"/>
<text id="t113" x="821.25" y="547.20" font-size="10.4" font-weight="bold" fill="#f2f2f2" textLength="26.45" lengthAdjust="spacingAndGlyphs">05:00</text>
<rect x="910.50" y="533.60" width="1.20" height="4.60" fill="#d8d8d8"/>
<text id="t114" x="897.70" y="547.20" font-size="10.4" font-weight="bold" fill="#f2f2f2" textLength="26.70" lengthAdjust="spacingAndGlyphs">10:00</text>
<rect x="987.20" y="533.60" width="1.20" height="4.60" fill="#d8d8d8"/>
<text id="t115" x="974.40" y="547.20" font-size="10.4" font-weight="bold" fill="#f2f2f2" textLength="26.70" lengthAdjust="spacingAndGlyphs">15:00</text>
<rect x="1063.90" y="533.60" width="1.20" height="4.60" fill="#d8d8d8"/>
<text id="t116" x="1051.10" y="547.20" font-size="10.4" font-weight="bold" fill="#f2f2f2" textLength="26.45" lengthAdjust="spacingAndGlyphs">20:00</text>
<rect x="1140.60" y="533.60" width="1.20" height="4.60" fill="#d8d8d8"/>
<text id="t117" x="1114.75" y="547.20" font-size="10.4" font-weight="bold" fill="#f2f2f2" textLength="26.70" lengthAdjust="spacingAndGlyphs">01:00</text>
<text id="t118" x="772.45" y="584.40" font-size="15.7" font-weight="normal" fill="#f2f2f2" textLength="242.45" lengthAdjust="spacingAndGlyphs" stroke="#f2f2f2" stroke-width="0.75">Specific Heat Consumption (GJ/t)</text>
<rect x="681.00" y="596.50" width="460.20" height="184.00" fill="#0e0e0e"/>
<rect x="681.00" y="779.80" width="460.00" height="1.40" fill="#284d3b"/>
<rect x="681.00" y="733.80" width="460.00" height="1.40" fill="#284d3b"/>
<rect x="681.00" y="687.80" width="460.00" height="1.40" fill="#284d3b"/>
<rect x="681.00" y="641.80" width="460.00" height="1.40" fill="#284d3b"/>
<rect x="681.00" y="595.80" width="460.00" height="1.40" fill="#284d3b"/>
<rect x="757.05" y="596.50" width="1.30" height="184.00" fill="#284d3b"/>
<rect x="833.75" y="596.50" width="1.30" height="184.00" fill="#284d3b"/>
<rect x="910.45" y="596.50" width="1.30" height="184.00" fill="#284d3b"/>
<rect x="987.15" y="596.50" width="1.30" height="184.00" fill="#284d3b"/>
<rect x="1063.85" y="596.50" width="1.30" height="184.00" fill="#284d3b"/>
<rect x="1140.55" y="596.50" width="0.65" height="184.00" fill="#284d3b"/>
<rect x="681.00" y="624.10" width="6.80" height="156.40" fill="#8aad69"/>
<rect x="688.85" y="622.00" width="14.29" height="158.50" fill="#8aad69"/>
<rect x="704.19" y="631.00" width="14.29" height="149.50" fill="#8aad69"/>
<rect x="719.54" y="627.50" width="14.29" height="153.00" fill="#8aad69"/>
<rect x="734.88" y="622.30" width="14.29" height="158.20" fill="#8aad69"/>
<rect x="750.22" y="628.00" width="14.29" height="152.50" fill="#8aad69"/>
<rect x="765.56" y="627.20" width="14.29" height="153.30" fill="#8aad69"/>
<rect x="780.91" y="623.10" width="14.29" height="157.40" fill="#8aad69"/>
<rect x="796.25" y="624.40" width="14.29" height="156.10" fill="#8aad69"/>
<rect x="811.59" y="618.40" width="14.29" height="162.10" fill="#8aad69"/>
<rect x="826.94" y="623.60" width="14.29" height="156.90" fill="#8aad69"/>
<rect x="842.28" y="624.90" width="14.29" height="155.60" fill="#8aad69"/>
<rect x="857.62" y="624.10" width="14.29" height="156.40" fill="#8aad69"/>
<rect x="872.97" y="617.60" width="14.29" height="162.90" fill="#8aad69"/>
<rect x="888.31" y="621.50" width="14.29" height="159.00" fill="#8aad69"/>
<rect x="903.65" y="621.90" width="14.29" height="158.60" fill="#8aad69"/>
<rect x="919.00" y="621.50" width="14.29" height="159.00" fill="#8aad69"/>
<rect x="934.34" y="619.20" width="14.29" height="161.30" fill="#8aad69"/>
<rect x="949.68" y="622.80" width="14.29" height="157.70" fill="#8aad69"/>
<rect x="965.02" y="621.00" width="14.29" height="159.50" fill="#8aad69"/>
<rect x="980.37" y="624.10" width="14.29" height="156.40" fill="#8aad69"/>
<rect x="995.71" y="616.90" width="14.29" height="163.60" fill="#8aad69"/>
<rect x="1011.05" y="619.60" width="14.29" height="160.90" fill="#8aad69"/>
<rect x="1026.40" y="616.25" width="14.29" height="164.25" fill="#8aad69"/>
<rect x="1041.74" y="623.75" width="14.29" height="156.75" fill="#8aad69"/>
<rect x="1057.08" y="626.90" width="14.29" height="153.60" fill="#8aad69"/>
<rect x="1072.42" y="607.50" width="14.29" height="173.00" fill="#8aad69"/>
<rect x="1087.77" y="618.10" width="14.29" height="162.40" fill="#8aad69"/>
<rect x="1103.11" y="616.90" width="14.29" height="163.60" fill="#8aad69"/>
<rect x="1118.45" y="612.50" width="14.29" height="168.00" fill="#8aad69"/>
<line x1="681.0" y1="619.50" x2="1141" y2="619.50" stroke="#f0f0f0" stroke-width="1.8" stroke-dasharray="2.8,1.6"/>
<rect x="680.40" y="596.50" width="1.20" height="184.60" fill="#d8d8d8"/>
<rect x="676.50" y="779.90" width="4.50" height="1.20" fill="#d8d8d8"/>
<text id="t119" x="668.95" y="784.50" font-size="10.4" font-weight="bold" fill="#f2f2f2" textLength="6.20" lengthAdjust="spacingAndGlyphs">0</text>
<rect x="676.50" y="733.90" width="4.50" height="1.20" fill="#d8d8d8"/>
<text id="t120" x="668.70" y="738.50" font-size="10.4" font-weight="bold" fill="#f2f2f2" textLength="6.20" lengthAdjust="spacingAndGlyphs">1</text>
<rect x="676.50" y="687.90" width="4.50" height="1.20" fill="#d8d8d8"/>
<text id="t121" x="668.95" y="692.50" font-size="10.4" font-weight="bold" fill="#f2f2f2" textLength="6.20" lengthAdjust="spacingAndGlyphs">2</text>
<rect x="676.50" y="641.90" width="4.50" height="1.20" fill="#d8d8d8"/>
<text id="t122" x="668.95" y="646.50" font-size="10.4" font-weight="bold" fill="#f2f2f2" textLength="6.20" lengthAdjust="spacingAndGlyphs">3</text>
<rect x="676.50" y="595.90" width="4.50" height="1.20" fill="#d8d8d8"/>
<text id="t123" x="669.20" y="602.20" font-size="10.4" font-weight="bold" fill="#f2f2f2" textLength="5.45" lengthAdjust="spacingAndGlyphs">4</text>
<rect x="680.40" y="779.90" width="461.10" height="1.20" fill="#d8d8d8"/>
<rect x="680.40" y="780.50" width="1.20" height="4.60" fill="#d8d8d8"/>
<text id="t124" x="667.35" y="794.10" font-size="10.4" font-weight="bold" fill="#f2f2f2" textLength="26.95" lengthAdjust="spacingAndGlyphs">19:00</text>
<rect x="757.10" y="780.50" width="1.20" height="4.60" fill="#d8d8d8"/>
<text id="t125" x="744.30" y="794.10" font-size="10.4" font-weight="bold" fill="#f2f2f2" textLength="26.70" lengthAdjust="spacingAndGlyphs">00:00</text>
<rect x="833.80" y="780.50" width="1.20" height="4.60" fill="#d8d8d8"/>
<text id="t126" x="821.25" y="794.10" font-size="10.4" font-weight="bold" fill="#f2f2f2" textLength="26.45" lengthAdjust="spacingAndGlyphs">05:00</text>
<rect x="910.50" y="780.50" width="1.20" height="4.60" fill="#d8d8d8"/>
<text id="t127" x="897.70" y="794.10" font-size="10.4" font-weight="bold" fill="#f2f2f2" textLength="26.70" lengthAdjust="spacingAndGlyphs">10:00</text>
<rect x="987.20" y="780.50" width="1.20" height="4.60" fill="#d8d8d8"/>
<text id="t128" x="974.40" y="794.10" font-size="10.4" font-weight="bold" fill="#f2f2f2" textLength="26.70" lengthAdjust="spacingAndGlyphs">15:00</text>
<rect x="1063.90" y="780.50" width="1.20" height="4.60" fill="#d8d8d8"/>
<text id="t129" x="1051.10" y="794.10" font-size="10.4" font-weight="bold" fill="#f2f2f2" textLength="26.45" lengthAdjust="spacingAndGlyphs">20:00</text>
<rect x="1140.60" y="780.50" width="1.20" height="4.60" fill="#d8d8d8"/>
<text id="t130" x="1114.75" y="794.10" font-size="10.4" font-weight="bold" fill="#f2f2f2" textLength="26.70" lengthAdjust="spacingAndGlyphs">01:00</text>
</svg>
</body></html>
